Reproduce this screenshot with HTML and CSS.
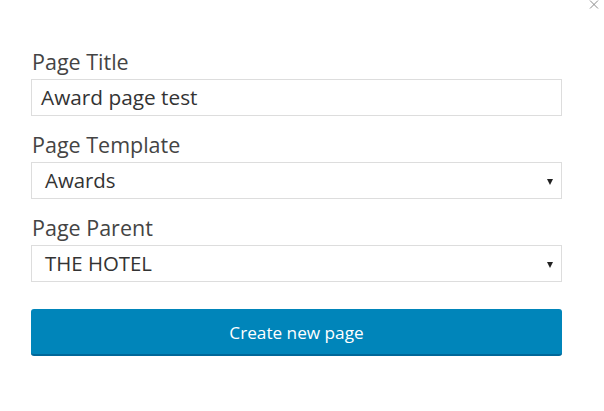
FILE: index.html
```html
<!DOCTYPE html>
<html>
<head>
<meta charset="utf-8">
<link rel="stylesheet" href="styles.css">
</head>
<body>
<div class="modal">
  <svg class="close" width="10" height="10" viewBox="0 0 10 10" aria-label="Close"><path d="M1 0.5 L9 8.5 M9 0.5 L1 8.5" stroke="#8a8a8a" stroke-width="1" fill="none"/></svg>
  <form class="form">
    <div class="field">
      <label class="label">Page Title</label>
      <div class="input">Award page test</div>
    </div>
    <div class="field">
      <label class="label">Page Template</label>
      <div class="input select"><span>Awards</span><span class="arrow"></span></div>
    </div>
    <div class="field">
      <label class="label">Page Parent</label>
      <div class="input select"><span>THE HOTEL</span><span class="arrow"></span></div>
    </div>
    <div class="button">Create new page</div>
  </form>
</div>
</body>
</html>
```
FILE: styles.css
```css
html, body {
  margin: 0;
  padding: 0;
  background: #fff;
}
body {
  font-family: "Open Sans", "Noto Sans", sans-serif;
  color: #444;
}
.modal {
  position: relative;
  width: 604px;
  height: 411px;
  box-sizing: border-box;
  padding: 45px 42px 0 31px;
}
.close {
  position: absolute;
  top: 0;
  right: 5px;
}
.form {
  display: flex;
  flex-direction: column;
}
.field {
  display: flex;
  flex-direction: column;
  margin-bottom: 12px;
}
.label {
  font-size: 21.5px;
  line-height: 34px;
  color: #444;
  padding-left: 1px;
}
.input {
  height: 37px;
  box-sizing: border-box;
  border: 1px solid #ddd;
  font-size: 20.8px;
  line-height: 35px;
  padding: 0 9px;
  color: #333;
  background: #fff;
}
.select {
  display: flex;
  justify-content: space-between;
  align-items: center;
  padding: 0 8px 0 13px;
  font-size: 20.4px;
}
.arrow {
  width: 0;
  height: 0;
  border-left: 3.5px solid transparent;
  border-right: 3.5px solid transparent;
  border-top: 6px solid #222;
  margin-top: 2px;
}
.button {
  margin-top: 15px;
  height: 47px;
  box-sizing: border-box;
  background: #0085ba;
  border-bottom: 2px solid #006799;
  border-radius: 3px;
  color: #fff;
  font-size: 17.2px;
  display: flex;
  justify-content: center;
  align-items: center;
  padding-top: 1px;
}
```
